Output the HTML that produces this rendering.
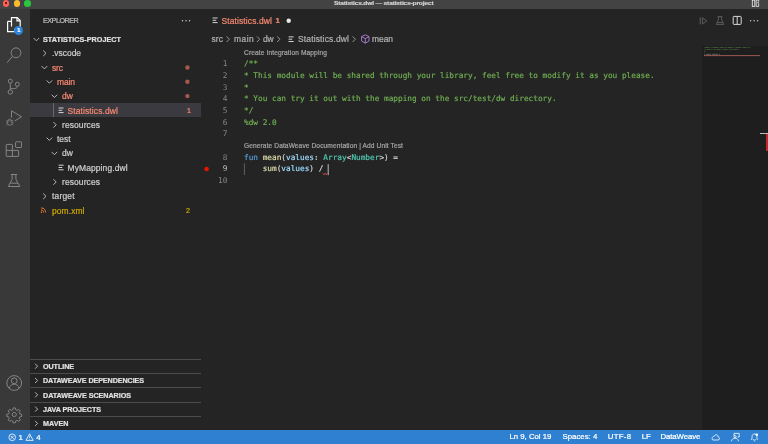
<!DOCTYPE html>
<html lang="en"><head><meta charset="utf-8"><title>Statistics.dwl — statistics-project</title>
<style>
html,body{margin:0;padding:0;background:#242424;}
body{width:768px;height:444px;position:relative;overflow:hidden;will-change:transform;font-family:"Liberation Sans",sans-serif;-webkit-font-smoothing:antialiased;}
.abs{position:absolute;}
.t{position:absolute;white-space:pre;line-height:1;transform:translateY(-50%);-webkit-text-stroke:0.22px currentColor;}
.ln{position:absolute;left:200px;width:27.4px;text-align:right;font-family:"DejaVu Sans Mono","Liberation Mono",monospace;font-size:7.8px;line-height:1;transform:translateY(-50%);color:#858585;}
.code{position:absolute;left:244px;font-family:"DejaVu Sans Mono","Liberation Mono",monospace;font-size:7.76px;line-height:1;white-space:pre;transform:translateY(-50%);color:#d4d4d4;-webkit-text-stroke:0.18px currentColor;}
svg{position:absolute;overflow:visible;}
</style></head><body>
<!-- backgrounds -->
<div class="abs" style="left:0;top:0;width:768px;height:9px;background:#434343"></div>
<div class="abs" style="left:0;top:9px;width:30px;height:421px;background:#393939"></div>
<div class="abs" style="left:30px;top:9px;width:171px;height:421px;background:#242424"></div>
<div class="abs" style="left:201px;top:9px;width:567px;height:421px;background:#242424"></div>
<div class="abs" style="left:702px;top:46px;width:66px;height:384px;background:#1e1e1e"></div>
<div class="abs" style="left:0;top:430px;width:768px;height:14px;background:#2f80d0"></div>
<!-- traffic lights -->
<div class="abs" style="left:2.6px;top:-0.1px;width:6.6px;height:6.6px;border-radius:50%;background:#fe5f57"></div>
<div class="abs" style="left:5.1px;top:2.1px;width:1.8px;height:1.8px;border-radius:50%;background:#4d0000"></div>
<div class="abs" style="left:13.7px;top:-0.1px;width:6.6px;height:6.6px;border-radius:50%;background:#fbbb2e"></div>
<div class="abs" style="left:24.3px;top:-0.1px;width:6.6px;height:6.6px;border-radius:50%;background:#29c63f"></div>
<!-- title right icon -->
<svg style="left:751px;top:0" width="10" height="8" viewBox="751 0 10 8" fill="none" stroke="#efefef" stroke-width="0.85"><rect x="752.3" y="0.1" width="2.5" height="6.3"/><path d="M758.7 3.2V6.4H756.2V0.1H758.7V1.8M757.2 2.6H758.7"/></svg>
<!-- selected row -->
<div class="abs" style="left:30px;top:103.2px;width:171px;height:14.1px;background:#3a3a40"></div>
<div class="abs" style="left:53px;top:103.2px;width:0.8px;height:14.1px;background:#6a6a6a"></div>
<!-- pane borders -->
<div class="abs" style="left:30px;top:358.8px;width:171px;height:0.9px;background:#4c4c4c"></div>
<div class="abs" style="left:30px;top:373px;width:171px;height:0.9px;background:#4c4c4c"></div>
<div class="abs" style="left:30px;top:387.2px;width:171px;height:0.9px;background:#4c4c4c"></div>
<div class="abs" style="left:30px;top:401.5px;width:171px;height:0.9px;background:#4c4c4c"></div>
<div class="abs" style="left:30px;top:415.8px;width:171px;height:0.9px;background:#4c4c4c"></div>
<!-- activity icons -->
<svg style="left:0;top:9px" width="30" height="421" viewBox="0 9 30 421" fill="none" stroke="#858585" stroke-width="1">
 <!-- files (active) -->
 <g stroke="#ffffff" stroke-width="1.2">
  <path d="M11.5 26.5V17.6H17.2L20.2 20.6V29H14.5"/>
  <path d="M17 17.8V20.8H20"/>
  <path d="M7.6 21.4H11.5M7.6 21.4V31.6H14.6V29"/>
 </g>
 <!-- search -->
 <circle cx="16" cy="52.8" r="4.9"/>
 <path d="M12.4 56.4L7 62.8"/>
 <!-- scm -->
 <circle cx="10.3" cy="81.2" r="2"/>
 <circle cx="10.3" cy="92" r="2.2"/>
 <circle cx="17.3" cy="84.3" r="2"/>
 <path d="M10.3 83.2V89.8M17.3 86.3C17.3 88.6 15.5 88.6 10.5 88.6"/>
 <!-- debug -->
 <path d="M11.5 117.6V110.8L21.5 116.8L14.8 120.9"/>
 <path d="M7.7 121.6C7.7 118.4 11.9 118.4 11.9 121.6V123.2C11.9 126 7.7 126 7.7 123.2Z" stroke-width="0.9"/>
 <path d="M7.7 120.9H11.9M6.2 120.2L7.6 121.2M13.4 120.2L12 121.2M6 122.6H7.6M12 122.6H13.6M6.2 125.2L7.7 124M13.4 125.2L11.9 124" stroke-width="0.7"/>
 <!-- extensions -->
 <path d="M6.8 144.4H11.8Q12.4 144.4 12.4 145V150.4H18Q18.6 150.4 18.6 151V155.8Q18.6 156.4 18 156.4H6.8Q6.2 156.4 6.2 155.8V145Q6.2 144.4 6.8 144.4ZM12.4 150.4V156.4M6.2 150.4H12.4"/>
 <rect x="15.6" y="141.8" width="5.9" height="5.7" rx="0.6"/>
 <!-- beaker -->
 <path d="M10.9 174.5H17M12.1 174.5V179.2L8.3 186.5H19.8L15.9 179.2V174.5M10.2 183.2H18"/>
 <!-- account -->
 <circle cx="14.2" cy="383" r="7.4"/>
 <circle cx="14.2" cy="380.8" r="2.9"/>
 <path d="M9.2 388.4C10 385.4 12 384.2 14.2 384.2C16.4 384.2 18.4 385.4 19.2 388.4"/>
 <!-- gear -->
 <g transform="translate(14.25 414.5) scale(0.9) translate(-14 -414.5)" stroke-width="1.1"><circle cx="14" cy="414.5" r="2.3"/>
 <path d="M12.8 407.2H15.2L15.6 409.3L17.2 410L19 408.8L20.7 410.5L19.5 412.3L20.2 413.9L22.3 414.3V416.7L20.2 417.1L19.5 418.7L20.7 420.5L19 422.2L17.2 421L15.6 421.7L15.2 423.8H12.8L12.4 421.7L10.8 421L9 422.2L7.3 420.5L8.5 418.7L7.8 417.1L5.7 416.7V414.3L7.8 413.9L8.5 412.3L7.3 410.5L9 408.8L10.8 410L12.4 409.3Z" stroke-linejoin="round"/></g>
</svg>
<!-- files badge -->
<div class="abs" style="left:14.3px;top:25.5px;width:9.2px;height:9.2px;border-radius:50%;background:#2b84d8"></div>
<div class="t" style="left:17.3px;top:30.8px;font-size:5.6px;color:#fff;font-weight:700">1</div>
<!-- sidebar chevrons etc -->
<svg style="left:30px;top:9px" width="171" height="421" viewBox="30 9 171 421" fill="none" stroke="#c5c5c5" stroke-width="0.9">
 <!-- ... -->
 <g fill="#c5c5c5" stroke="none"><circle cx="182.5" cy="20.7" r="0.75"/><circle cx="186" cy="20.7" r="0.75"/><circle cx="189.5" cy="20.7" r="0.75"/></g>
 <!-- down chevrons: header, src, main, dw, test, dw -->
 <path d="M33.6 38L36.4 40.8L39.2 38"/>
 <path d="M41.6 66.1L44.4 68.9L47.2 66.1"/>
 <path d="M46.6 80.4L49.4 83.2L52.2 80.4"/>
 <path d="M51.6 94.7L54.4 97.5L57.2 94.7"/>
 <path d="M46.6 137.6L49.4 140.4L52.2 137.6"/>
 <path d="M51.6 151.9L54.4 154.7L57.2 151.9"/>
 <!-- right chevrons: .vscode, resources, resources, target -->
 <path d="M43.2 50.5L46 53.3L43.2 56.1"/>
 <path d="M53.4 122L56.2 124.8L53.4 127.6"/>
 <path d="M53.4 179.2L56.2 182L53.4 184.8"/>
 <path d="M43.2 193.5L46 196.3L43.2 199.1"/>
 <!-- pane chevrons -->
 <path d="M35.1 363.7L37.6 366.2L35.1 368.7"/>
 <path d="M35.1 378.0L37.6 380.5L35.1 383.0"/>
 <path d="M35.1 392.3L37.6 394.8L35.1 397.3"/>
 <path d="M35.1 406.6L37.6 409.1L35.1 411.6"/>
 <path d="M35.1 420.9L37.6 423.4L35.1 425.9"/>
 <!-- file icons -->
 <path d="M58.6 108H63.6M58.6 110.3H62.2M58.6 112.6H63.6" stroke="#d4d4d4" stroke-width="1"/>
 <path d="M58.6 165.2H63.6M58.6 167.5H62.2M58.6 169.8H63.6" stroke="#d4d4d4" stroke-width="1"/>
 <!-- rss icon pom.xml -->
 <g stroke="#e37933" stroke-width="1"><path d="M41 209.9C42.6 209.9 43.6 210.9 43.6 212.5M41 207.9C43.8 207.9 45.6 209.7 45.6 212.5"/><circle cx="41.4" cy="212.1" r="0.45" fill="#e37933"/></g>
 <!-- modified dots -->
 <g fill="#a3594c" stroke="none"><circle cx="187.4" cy="67.5" r="2.2"/><circle cx="187.4" cy="81.8" r="2.2"/><circle cx="187.4" cy="96.1" r="2.2"/></g>
</svg>
<!-- editor area decorations -->
<svg style="left:201px;top:9px" width="567" height="421" viewBox="201 9 567 421" fill="none" stroke="#c5c5c5" stroke-width="0.9">
 <!-- tab file icon -->
 <path d="M212.6 18H217.6M212.6 20.3H216.2M212.6 22.6H217.6" stroke="#d4d4d4" stroke-width="1"/>
 <!-- tab dirty dot -->
 <circle cx="288.7" cy="20.7" r="2.2" fill="#e8e8e8" stroke="none"/>
 <!-- breadcrumb chevrons -->
 <g stroke="#a0a0a0"><path d="M226.6 36.4L229.4 39.2L226.6 42"/><path d="M256.9 36.4L259.7 39.2L256.9 42"/><path d="M277.2 36.4L280 39.2L277.2 42"/><path d="M352.6 36.4L355.4 39.2L352.6 42"/></g>
 <path d="M288.6 36.9H293.6M288.6 39.2H292.2M288.6 41.5H293.6" stroke="#d4d4d4" stroke-width="1"/>
 <!-- symbol method icon (purple cube) -->
 <g stroke="#b180d7" stroke-width="0.9"><path d="M365.3 34.8L369 36.6V41L365.3 43.2L361.6 41V36.6Z"/><path d="M361.6 36.6L365.3 38.6L369 36.6M365.3 38.6V43.2"/></g>
 <!-- breakpoint -->
 <circle cx="206.6" cy="169" r="2.3" fill="#e51400" stroke="none"/>
 <!-- indent guide / cursor -->
 <path d="M244.4 163.3V175" stroke="#707070" stroke-width="0.8"/>
 <path d="M328.2 164.2V175.2" stroke="#d0d0d0" stroke-width="0.9"/>
 <path d="M322.6 173.4L323.8 174.5L325 173.4L326.2 174.5L327.3 173.5" stroke="#f14c4c" stroke-width="1"/>
 <!-- editor actions -->
 <g stroke="#626262"><path d="M700.2 17.2V24.4M702.4 17.8L706.8 20.9L702.4 24Z"/>
 <path d="M717.6 16.6H722.4M718.4 16.6V19.8L716.4 24.4H723.8L721.6 19.8V16.6M717.2 22.6H723"/></g>
 <rect x="733.2" y="16.4" width="8" height="8" rx="0.8" stroke="#d8d8d8" stroke-width="1"/><path d="M737.2 16.4V24.4" stroke="#d8d8d8" stroke-width="1"/>
 <g fill="#c5c5c5" stroke="none"><circle cx="750.6" cy="20.8" r="0.75"/><circle cx="754.1" cy="20.8" r="0.75"/><circle cx="757.6" cy="20.8" r="0.75"/></g>
 <!-- minimap -->
 <g stroke-width="0.8"><path d="M704.5 47.5H751" stroke="#425f38" stroke-dasharray="5 1 1 1 6 1 4 1 2 1"/><path d="M704.5 49.5H739" stroke="#425f38" stroke-dasharray="1 1 4 1 1 1 2 1 4 1"/><path d="M704.3 51.3H705.3" stroke="#5d8a49"/><path d="M704 54.3H722" stroke="#6b6f6b" stroke-dasharray="1 1 5 1 6 1 1 2"/></g>
 <path d="M704 55.6H760" stroke="#9a5a4f" stroke-width="1"/>
 <path d="M760 133.5H768" stroke="#bcbcbc" stroke-width="1"/>
 <rect x="766" y="134" width="2" height="17" fill="#c1272d" stroke="none"/>
</svg>
<!-- status bar icons -->
<svg style="left:0;top:430px" width="768" height="14" viewBox="0 430 768 14" fill="none" stroke="#ffffff" stroke-width="0.8">
 <circle cx="12.2" cy="437.3" r="3.3"/><path d="M10.7 435.8L13.7 438.8M13.7 435.8L10.7 438.8"/>
 <path d="M29.6 433.8L33.2 440.4H26Z" stroke-linejoin="round"/><path d="M29.6 435.8V438.3M29.6 439V439.6" stroke-width="0.7"/>
 <!-- cloud, feedback, bell -->
 <path d="M713 440H718C720 440 720 437.3 718.2 437.1C718.2 434.4 714.9 434 714.2 436.3C711.9 436.1 711.4 440 713 440Z"/>
 <path d="M734 436V433.4H739.2V437H737.6" stroke-linejoin="round"/><circle cx="735" cy="436.7" r="1.1"/><path d="M731.4 441.2C732 438.8 733.6 438.2 735 438.2C736.4 438.2 738 438.8 738.6 441.2"/>
 <g transform="translate(-1.3 0.2)"><path d="M752.6 439.2C753.5 438.3 753.4 437 753.4 436C753.4 434.6 754.5 433.8 755.8 433.8C757.1 433.8 758.2 434.6 758.2 436C758.2 437 758.1 438.3 759 439.2" stroke-dasharray="none"/><path d="M752.6 439.3H759" stroke-dasharray="1 1"/><path d="M755 440.6H756.6"/><circle cx="758.1" cy="434.6" r="1.3" fill="#fff" stroke="none"/></g>
</svg>
<div class="t g" id="t0" style="left:334.0px;top:3.5px;font-size:6.60px;color:#d4d4d4;font-weight:700;font-family:'Liberation Sans', sans-serif;letter-spacing:-0.164px;transform:translateY(-50%) scaleY(0.85);">Statistics.dwl — statistics-project</div>
<div class="t g" id="t1" style="left:43.0px;top:21.0px;font-size:7.20px;color:#bbbbbb;font-weight:400;font-family:'Liberation Sans', sans-serif;letter-spacing:-0.501px;">EXPLORER</div>
<div class="t g" id="t2" style="left:43.0px;top:40.1px;font-size:7.20px;color:#e0e0e0;font-weight:700;font-family:'Liberation Sans', sans-serif;letter-spacing:0.046px;">STATISTICS-PROJECT</div>
<div class="t g" id="t3" style="left:52.0px;top:53.3px;font-size:8.45px;color:#cccccc;font-weight:400;font-family:'Liberation Sans', sans-serif;letter-spacing:-0.012px;">.vscode</div>
<div class="t g" id="t4" style="left:52.0px;top:67.6px;font-size:8.45px;color:#f48771;font-weight:400;font-family:'Liberation Sans', sans-serif;letter-spacing:-0.100px;">src</div>
<div class="t g" id="t5" style="left:57.0px;top:81.9px;font-size:8.45px;color:#f48771;font-weight:400;font-family:'Liberation Sans', sans-serif;letter-spacing:-0.085px;">main</div>
<div class="t g" id="t6" style="left:62.0px;top:96.2px;font-size:8.45px;color:#f48771;font-weight:400;font-family:'Liberation Sans', sans-serif;letter-spacing:0.135px;">dw</div>
<div class="t g" id="t7" style="left:67.5px;top:110.5px;font-size:8.45px;color:#f48771;font-weight:400;font-family:'Liberation Sans', sans-serif;letter-spacing:0.128px;">Statistics.dwl</div>
<div class="t g" id="t8" style="left:62.0px;top:124.8px;font-size:8.45px;color:#cccccc;font-weight:400;font-family:'Liberation Sans', sans-serif;letter-spacing:0.112px;">resources</div>
<div class="t g" id="t9" style="left:57.0px;top:139.1px;font-size:8.45px;color:#cccccc;font-weight:400;font-family:'Liberation Sans', sans-serif;letter-spacing:0.026px;">test</div>
<div class="t g" id="t10" style="left:62.0px;top:153.4px;font-size:8.45px;color:#cccccc;font-weight:400;font-family:'Liberation Sans', sans-serif;letter-spacing:0.135px;">dw</div>
<div class="t g" id="t11" style="left:67.5px;top:167.7px;font-size:8.45px;color:#cccccc;font-weight:400;font-family:'Liberation Sans', sans-serif;letter-spacing:0.126px;">MyMapping.dwl</div>
<div class="t g" id="t12" style="left:62.0px;top:182.0px;font-size:8.45px;color:#cccccc;font-weight:400;font-family:'Liberation Sans', sans-serif;letter-spacing:0.112px;">resources</div>
<div class="t g" id="t13" style="left:52.0px;top:196.3px;font-size:8.45px;color:#cccccc;font-weight:400;font-family:'Liberation Sans', sans-serif;letter-spacing:0.204px;">target</div>
<div class="t g" id="t14" style="left:52.0px;top:210.6px;font-size:8.45px;color:#cca700;font-weight:400;font-family:'Liberation Sans', sans-serif;letter-spacing:0.094px;">pom.xml</div>
<div class="t g" id="t15" style="left:187.0px;top:110.5px;font-size:7.20px;color:#f48771;font-weight:400;font-family:'Liberation Sans', sans-serif;letter-spacing:0.000px;">1</div>
<div class="t g" id="t16" style="left:186.0px;top:211.0px;font-size:7.20px;color:#cca700;font-weight:400;font-family:'Liberation Sans', sans-serif;letter-spacing:0.000px;">2</div>
<div class="t g" id="t17" style="left:43.0px;top:367.0px;font-size:7.20px;color:#e0e0e0;font-weight:700;font-family:'Liberation Sans', sans-serif;letter-spacing:-0.084px;">OUTLINE</div>
<div class="t g" id="t18" style="left:43.0px;top:381.3px;font-size:7.20px;color:#e0e0e0;font-weight:700;font-family:'Liberation Sans', sans-serif;letter-spacing:-0.094px;">DATAWEAVE DEPENDENCIES</div>
<div class="t g" id="t19" style="left:43.0px;top:395.6px;font-size:7.20px;color:#e0e0e0;font-weight:700;font-family:'Liberation Sans', sans-serif;letter-spacing:-0.057px;">DATAWEAVE SCENARIOS</div>
<div class="t g" id="t20" style="left:43.0px;top:409.9px;font-size:7.20px;color:#e0e0e0;font-weight:700;font-family:'Liberation Sans', sans-serif;letter-spacing:-0.046px;">JAVA PROJECTS</div>
<div class="t g" id="t21" style="left:43.0px;top:424.2px;font-size:7.20px;color:#e0e0e0;font-weight:700;font-family:'Liberation Sans', sans-serif;letter-spacing:0.014px;">MAVEN</div>
<div class="t g" id="t22" style="left:221.5px;top:20.9px;font-size:8.45px;color:#f48771;font-weight:400;font-family:'Liberation Sans', sans-serif;letter-spacing:0.128px;">Statistics.dwl</div>
<div class="t g" id="t23" style="left:275.6px;top:21.2px;font-size:7.80px;color:#f48771;font-weight:700;font-family:'Liberation Sans', sans-serif;letter-spacing:0.000px;">1</div>
<div class="t g" id="t24" style="left:211.5px;top:39.2px;font-size:8.45px;color:#b0b0b0;font-weight:400;font-family:'Liberation Sans', sans-serif;letter-spacing:0.100px;">src</div>
<div class="t g" id="t25" style="left:234.0px;top:39.2px;font-size:8.45px;color:#b0b0b0;font-weight:400;font-family:'Liberation Sans', sans-serif;letter-spacing:0.487px;">main</div>
<div class="t g" id="t26" style="left:263.0px;top:39.2px;font-size:8.45px;color:#b0b0b0;font-weight:400;font-family:'Liberation Sans', sans-serif;letter-spacing:-0.131px;">dw</div>
<div class="t g" id="t27" style="left:298.0px;top:39.2px;font-size:8.45px;color:#b0b0b0;font-weight:400;font-family:'Liberation Sans', sans-serif;letter-spacing:0.166px;">Statistics.dwl</div>
<div class="t g" id="t28" style="left:372.0px;top:39.2px;font-size:8.45px;color:#b0b0b0;font-weight:400;font-family:'Liberation Sans', sans-serif;letter-spacing:-0.031px;">mean</div>
<div class="t g" id="t29" style="left:244.0px;top:53.1px;font-size:6.60px;color:#a0a0a0;font-weight:400;font-family:'Liberation Sans', sans-serif;letter-spacing:0.121px;">Create Integration Mapping</div>
<div class="t g" id="t30" style="left:244.0px;top:145.9px;font-size:6.60px;color:#a0a0a0;font-weight:400;font-family:'Liberation Sans', sans-serif;letter-spacing:0.106px;">Generate DataWeave Documentation | Add Unit Test</div>
<div class="t g" id="t31" style="left:18.6px;top:437.9px;font-size:7.80px;color:#ffffff;font-weight:400;font-family:'Liberation Sans', sans-serif;letter-spacing:0.000px;">1</div>
<div class="t g" id="t32" style="left:36.3px;top:437.9px;font-size:7.80px;color:#ffffff;font-weight:400;font-family:'Liberation Sans', sans-serif;letter-spacing:0.000px;">4</div>
<div class="t g" id="t33" style="left:509.5px;top:437.3px;font-size:7.80px;color:#ffffff;font-weight:400;font-family:'Liberation Sans', sans-serif;letter-spacing:-0.013px;">Ln 9, Col 19</div>
<div class="t g" id="t34" style="left:562.5px;top:437.3px;font-size:7.80px;color:#ffffff;font-weight:400;font-family:'Liberation Sans', sans-serif;letter-spacing:0.013px;">Spaces: 4</div>
<div class="t g" id="t35" style="left:607.8px;top:437.3px;font-size:7.80px;color:#ffffff;font-weight:400;font-family:'Liberation Sans', sans-serif;letter-spacing:0.290px;">UTF-8</div>
<div class="t g" id="t36" style="left:641.7px;top:437.3px;font-size:7.80px;color:#ffffff;font-weight:400;font-family:'Liberation Sans', sans-serif;letter-spacing:-0.073px;">LF</div>
<div class="t g" id="t37" style="left:660.5px;top:437.3px;font-size:7.80px;color:#ffffff;font-weight:400;font-family:'Liberation Sans', sans-serif;letter-spacing:-0.095px;">DataWeave</div>
<div class="ln" style="top:64.1px;color:#858585">1</div><div class="code" style="top:64.1px"><span style="color:#6fae52">/**</span></div>
<div class="ln" style="top:75.8px;color:#858585">2</div><div class="code" style="top:75.8px"><span style="color:#6fae52">* This module will be shared through your library, feel free to modify it as you please.</span></div>
<div class="ln" style="top:87.5px;color:#858585">3</div><div class="code" style="top:87.5px"><span style="color:#6fae52">*</span></div>
<div class="ln" style="top:99.2px;color:#858585">4</div><div class="code" style="top:99.2px"><span style="color:#6fae52">* You can try it out with the mapping on the src/test/dw directory.</span></div>
<div class="ln" style="top:110.9px;color:#858585">5</div><div class="code" style="top:110.9px"><span style="color:#6fae52">*/</span></div>
<div class="ln" style="top:122.6px;color:#858585">6</div><div class="code" style="top:122.6px"><span style="color:#6fae52">%dw 2.0</span></div>
<div class="ln" style="top:134.3px;color:#858585">7</div><div class="ln" style="top:157.7px;color:#858585">8</div><div class="code" style="top:157.7px"><span style="color:#569cd6">fun</span> <span style="color:#dcdcaa">mean</span>(<span style="color:#9cdcfe">values</span>: <span style="color:#4ec9b0">Array</span>&lt;<span style="color:#4ec9b0">Number</span>&gt;) =</div>
<div class="ln" style="top:169.4px;color:#c6c6c6">9</div><div class="code" style="top:169.4px">    <span style="color:#dcdcaa">sum</span>(<span style="color:#9cdcfe">values</span>) /</div>
<div class="ln" style="top:181.1px;color:#858585">10</div></body></html>
